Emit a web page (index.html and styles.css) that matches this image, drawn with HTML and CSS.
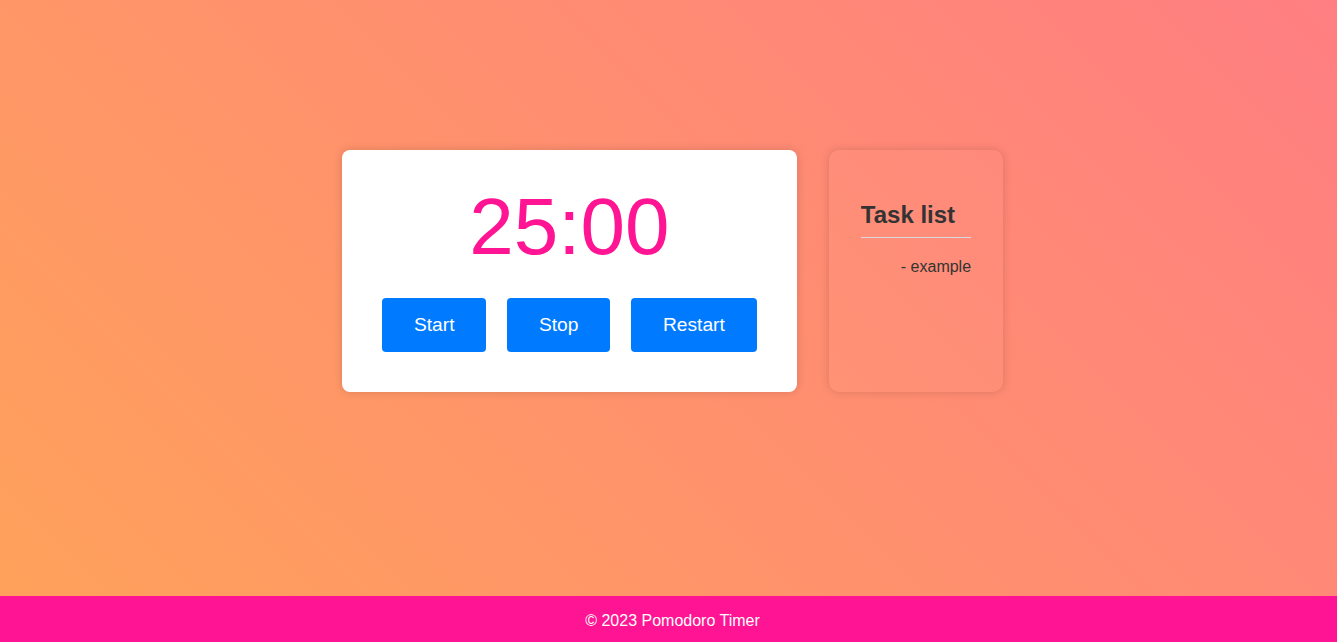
FILE: index.html
```html
<!DOCTYPE html>
<html lang="en">
<head>
<meta charset="UTF-8">
<title>Pomodoro Timer</title>
<link rel="stylesheet" href="styles.css">
</head>
<body>
<main class="main">
  <div class="layout">
    <section class="timer-card">
      <div class="timer">25:00</div>
      <div class="controls">
        <button class="btn">Start</button>
        <button class="btn">Stop</button>
        <button class="btn">Restart</button>
      </div>
    </section>
    <aside class="task-card">
      <h2 class="task-title">Task list</h2>
      <ul class="task-list">
        <li class="task-item">- example</li>
      </ul>
    </aside>
  </div>
</main>
<footer class="footer">© 2023 Pomodoro Timer</footer>
</body>
</html>
```
FILE: styles.css
```css
html, body {
  margin: 0;
  padding: 0;
  height: 100%;
}
body {
  font-family: "Liberation Sans", Arial, sans-serif;
  background: linear-gradient(45deg, #ffa25a 0%, #ff7e82 100%);
  display: flex;
  flex-direction: column;
  min-height: 100vh;
}
.main {
  flex: 1;
  padding-top: 150px;
}
.layout {
  display: flex;
  justify-content: center;
  align-items: stretch;
  gap: 32px;
  padding-left: 8px;
}
.timer-card {
  background: #fff;
  border-radius: 8px;
  box-shadow: 0 0 10px rgba(0, 0, 0, 0.15);
  padding: 31px 40px 40px;
  text-align: center;
}
.timer {
  font-size: 80px;
  line-height: 92px;
  color: #ff1493;
  margin-bottom: 25px;
}
.controls {
  display: flex;
  gap: 20.5px;
}
.btn {
  font-family: "Liberation Sans", Arial, sans-serif;
  font-size: 19.2px;
  line-height: 22px;
  padding: 16px 32px;
  border: none;
  border-radius: 4px;
  background: #007bff;
  color: #fff;
  cursor: pointer;
}
.task-card {
  background: rgba(255, 255, 255, 0.03);
  border-radius: 10px;
  box-shadow: 0 0 10px rgba(0, 0, 0, 0.15);
  padding: 32px;
}
.task-title {
  font-size: 24px;
  font-weight: bold;
  color: #333;
  margin: 19px 0 20px;
  padding-bottom: 8px;
  border-bottom: 1px solid #d8d8e0;
}
.task-list {
  margin: 0;
  padding-left: 40px;
  list-style: none;
}
.task-item {
  font-size: 16px;
  color: #333;
}
.footer {
  background: #ff1493;
  color: #fff;
  text-align: center;
  font-size: 16px;
  line-height: 18px;
  padding: 16px 0 12px 8px;
}
```
